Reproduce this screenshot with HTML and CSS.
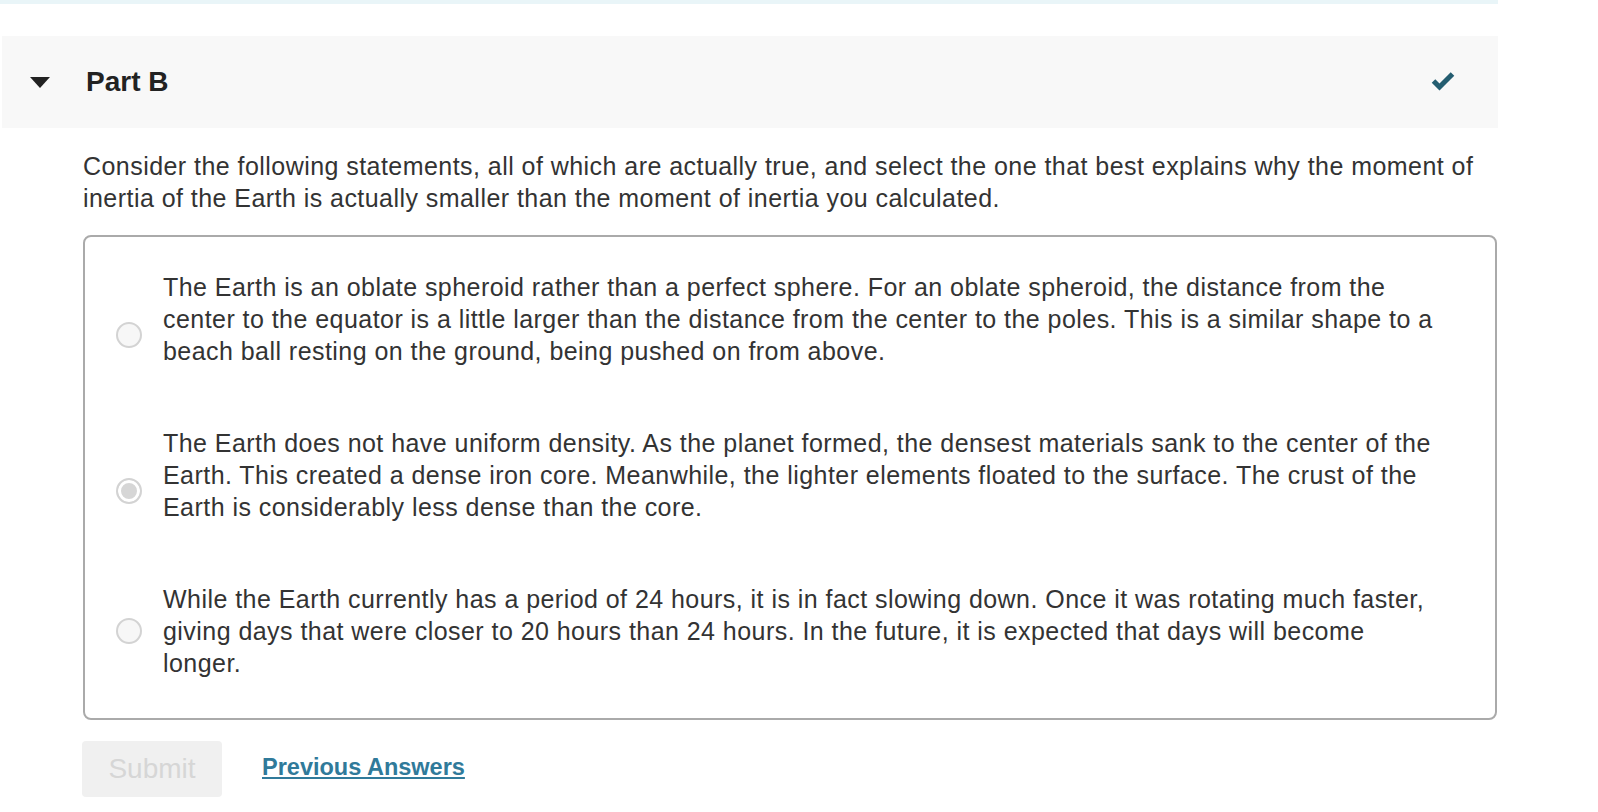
FILE: index.html
```html
<!DOCTYPE html>
<html>
<head>
    <link rel="stylesheet" href="styles.css">
</head>
<body>
    <div class="top-strip"></div>

    <div class="part-header">
        <span class="caret"></span>
        <h2 class="part-title">Part B</h2>
        <svg class="check" width="26" height="20" viewBox="0 0 26 20">
            <path d="M3.5 10 L9.5 16 L22.5 3" fill="none" stroke="#245d70" stroke-width="5" stroke-linejoin="miter" stroke-linecap="butt"/>
        </svg>
    </div>

    <div class="part-body">
        <p class="question">Consider the following statements, all of which are actually true, and select the one that best explains why the moment of inertia of the Earth is actually smaller than the moment of inertia you calculated.</p>

        <div class="choices">
            <label class="choice">
                <span class="radio"></span>
                <span class="choice-text tall">The Earth is an oblate spheroid rather than a perfect sphere. For an oblate spheroid, the distance from the center to the equator is a little larger than the distance from the center to the poles. This is a similar shape to a beach ball resting on the ground, being pushed on from above.</span>
            </label>
            <label class="choice">
                <span class="radio checked"></span>
                <span class="choice-text tall">The Earth does not have uniform density. As the planet formed, the densest materials sank to the center of the Earth. This created a dense iron core. Meanwhile, the lighter elements floated to the surface. The crust of the Earth is considerably less dense than the core.</span>
            </label>
            <label class="choice">
                <span class="radio"></span>
                <span class="choice-text">While the Earth currently has a period of 24 hours, it is in fact slowing down. Once it was rotating much faster, giving days that were closer to 20 hours than 24 hours. In the future, it is expected that days will become longer.</span>
            </label>
        </div>

        <div class="actions">
            <button class="submit" disabled>Submit</button>
            <a class="prev-link" href="#">Previous Answers</a>
        </div>
    </div>
</body>
</html>
```

FILE: styles.css
```css
body {
    margin: 0;
    padding: 0;
    font-family: "Liberation Sans", Arial, sans-serif;
    color: #333;
    background-color: #fff;
}

.top-strip {
    width: 1498px;
    height: 4px;
    background-color: #e9f5f8;
}

.part-header {
    display: flex;
    align-items: center;
    width: 1496px;
    height: 92px;
    margin: 32px 0 0 2px;
    padding: 0 42px 0 28px;
    box-sizing: border-box;
    background-color: #f8f8f8;
}

.caret {
    width: 0;
    height: 0;
    border-left: 10.5px solid transparent;
    border-right: 10.5px solid transparent;
    border-top: 11px solid #222;
    margin-top: 1px;
}

.part-title {
    flex: 1;
    margin: 0 0 0 36px;
    font-size: 28px;
    font-weight: bold;
    color: #222;
}

.check {
    display: block;
    margin-top: -2px;
}

.part-body {
    width: 1414px;
    margin-left: 83px;
}

.question {
    margin: 22px 0 21px;
    font-size: 25px;
    letter-spacing: 0.45px;
    line-height: 32px;
}

.choices {
    border: 2px solid #aaa;
    border-radius: 8px;
    padding: 34px 50px 39px 31px;
}

.choice {
    display: flex;
    align-items: center;
    gap: 21px;
    margin-bottom: 28px;
    cursor: pointer;
}

.choice:last-child {
    margin-bottom: 0;
}

.choice-text {
    flex: 1;
    font-size: 25px;
    letter-spacing: 0.45px;
    line-height: 32px;
}

.choice-text.tall {
    padding-bottom: 32px;
}

.radio {
    flex: none;
    width: 26px;
    height: 26px;
    box-sizing: border-box;
    border: 2px solid #d3d3d3;
    border-radius: 50%;
    background-color: #f7f7f7;
}

.radio.checked {
    background-color: #d6d6d6;
    box-shadow: inset 0 0 0 3px #fff;
}

.actions {
    display: flex;
    align-items: center;
    gap: 40px;
    margin-top: 21px;
}

.submit {
    width: 140px;
    height: 56px;
    border: none;
    border-radius: 4px;
    background-color: #f0f0f0;
    color: #d6d6d6;
    font-family: "Liberation Sans", Arial, sans-serif;
    font-size: 28px;
    padding: 0;
    margin-left: -1px;
}

.prev-link {
    font-size: 23.5px;
    font-weight: bold;
    color: #307a9a;
    text-decoration: underline;
    margin-top: -4px;
}
```
